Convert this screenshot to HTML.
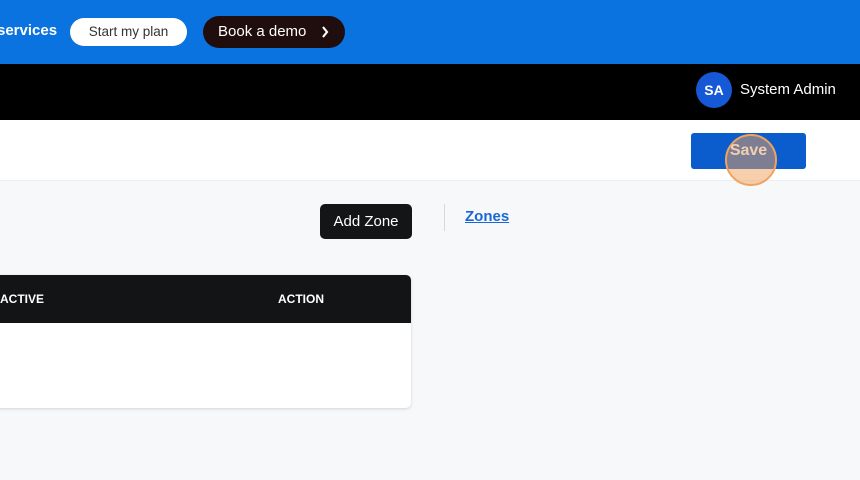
<!DOCTYPE html>
<html><head><style>
body{margin:0;width:860px;height:480px;overflow:hidden;background:#f7f8fa;font-family:"Liberation Sans",sans-serif;position:relative}
.a{position:absolute}
</style></head><body>
<div class="a" style="left:0;top:0;width:860px;height:64px;background:#0a73e0"></div>
<div class="a" style="top:22px;font-size:15px;font-weight:bold;color:#fff;left:-3px">services</div>
<div class="a" style="left:70px;top:18px;width:117px;height:28px;border-radius:14px;background:#fff;color:#333;font-size:13.5px;line-height:28px;text-align:center">Start my plan</div>
<div class="a" style="left:203px;top:16px;width:142px;height:32px;border-radius:16px;background:#200d0d;color:#fff;font-size:15px;line-height:32px"><span style="margin-left:15px">Book a demo</span>
<svg class="a" style="left:118px;top:10px" width="8" height="12" viewBox="0 0 8 12"><path d="M2 1l4 5-4 5" stroke="#fff" stroke-width="2.2" fill="none"/></svg></div>
<div class="a" style="left:0;top:64px;width:860px;height:56px;background:#000"></div>
<div class="a" style="left:696px;top:72px;width:36px;height:36px;border-radius:50%;background:#1559d6;color:#fff;font-weight:bold;font-size:14px;line-height:36px;text-align:center">SA</div>
<div class="a" style="left:740px;top:81px;color:#fff;font-size:15px">System Admin</div>
<div class="a" style="left:0;top:120px;width:860px;height:60px;background:#fff;border-bottom:1px solid #eceef0"></div>
<div class="a" style="left:691px;top:133px;width:115px;height:36px;border-radius:3px;background:#0b5ccd;"></div>
<div class="a" style="left:725px;top:134px;width:52px;height:52px;border-radius:50%;background:rgba(240,160,90,.5);border:2px solid #f0a35e;box-sizing:border-box"></div>
<div class="a" style="left:691px;top:142px;width:115px;text-align:center;color:#f0d0b0;font-weight:bold;font-size:16px">Save</div>
<div class="a" style="left:320px;top:204px;width:92px;height:35px;border-radius:5px;background:#141517;color:#fff;font-size:15px;line-height:35px;text-align:center">Add Zone</div>
<div class="a" style="left:444px;top:204px;width:1px;height:27px;background:#d6d8dc"></div>
<div class="a" style="left:465px;top:208px;color:#1a66d6;font-size:15px;font-weight:bold;text-decoration:underline">Zones</div>
<div class="a" style="left:-6px;top:275px;width:417px;height:133px;border-radius:5px;background:#fff;box-shadow:0 1px 3px rgba(0,0,0,.15);overflow:hidden">
<div style="height:48px;background:#131416"></div></div>
<div class="a" style="left:0;top:292px;color:#fff;font-size:12px;font-weight:bold">ACTIVE</div>
<div class="a" style="left:278px;top:292px;color:#fff;font-size:12px;font-weight:bold">ACTION</div>
</body></html>
